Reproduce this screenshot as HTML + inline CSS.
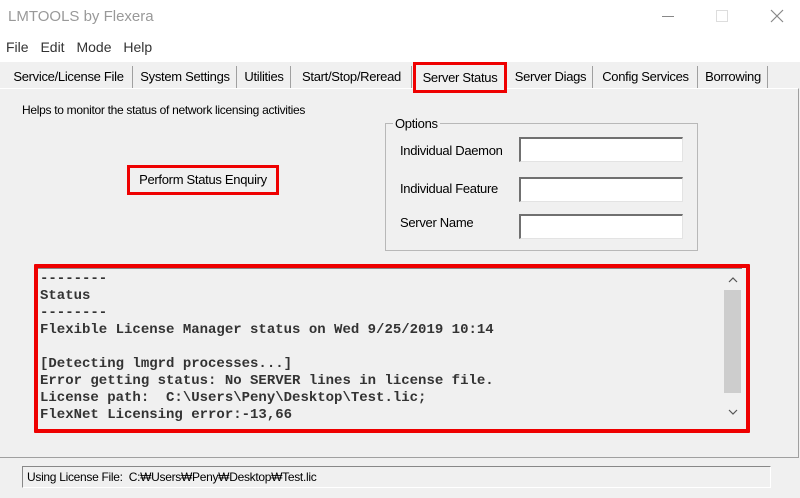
<!DOCTYPE html>
<html><head><meta charset="utf-8"><style>
body{margin:0;width:800px;height:498px;background:#f0f0f0;position:relative;overflow:hidden;font-family:"Liberation Sans","Noto Sans CJK KR",sans-serif;font-size:12px;color:#000}
.a{position:absolute}
.tab{position:absolute;top:66px;height:22px;line-height:22px;font-size:13px;text-align:center;border-right:1px solid #a0a0a0;letter-spacing:-0.3px}
.inp{position:absolute;left:519px;width:164px;height:25px;background:#fff;border-top:2px solid #707070;border-left:2px solid #707070;border-right:1px solid #e3e3e3;border-bottom:1px solid #e3e3e3;box-sizing:border-box}
.lbl{position:absolute;left:400px;font-size:13px;letter-spacing:-0.3px}
.mono{position:absolute;left:40px;font-family:"Liberation Mono",monospace;font-weight:bold;font-size:14px;line-height:17px;white-space:pre;color:#333}
</style></head><body>
<div class="a" style="left:0;top:0;width:800px;height:62px;background:#fff"></div>
<div class="a" style="left:8px;top:8px;font-size:15px;color:#999">LMTOOLS by Flexera</div>
<div class="a" style="left:662px;top:16px;width:12px;height:1px;background:#888"></div>
<div class="a" style="left:716px;top:10px;width:10px;height:10px;border:1px solid #ddd"></div>
<svg class="a" style="left:770px;top:9px" width="14" height="14"><path d="M1 1L13 13M13 1L1 13" stroke="#888" stroke-width="1.2"/></svg>
<div class="a" style="left:6px;top:39px;font-size:14px;color:#333;word-spacing:8px">File Edit Mode Help</div>
<div class="a" style="left:0;top:88px;width:798px;height:368px;border-right:1px solid #a0a0a0;border-bottom:1px solid #a0a0a0;border-top:1px solid #fff"></div>
<div class="tab" style="left:5px;width:127px">Service/License File</div>
<div class="tab" style="left:134px;width:102px">System Settings</div>
<div class="tab" style="left:238px;width:52px">Utilities</div>
<div class="tab" style="left:292px;width:119px">Start/Stop/Reread</div>
<div class="tab" style="left:509px;width:83px">Server Diags</div>
<div class="tab" style="left:594px;width:103px">Config Services</div>
<div class="tab" style="left:699px;width:68px">Borrowing</div>
<div class="a" style="left:413px;top:62px;width:88px;height:25px;border:3px solid #e00;line-height:25px;text-align:center;font-size:13px;background:#f0f0f0;letter-spacing:-0.3px">Server Status</div>
<div class="a" style="left:22px;top:103px;font-size:12px;letter-spacing:-0.3px">Helps to monitor the status of network licensing activities</div>
<div class="a" style="left:127px;top:165px;width:146px;height:24px;border:3px solid #e00;text-align:center;line-height:24px;font-size:13px;letter-spacing:-0.3px">Perform Status Enquiry</div>
<div class="a" style="left:385px;top:123px;width:311px;height:126px;border:1px solid #b8b8b8"></div>
<div class="a" style="left:393px;top:116px;background:#f0f0f0;padding:0 2px;font-size:13px;letter-spacing:-0.3px">Options</div>
<div class="lbl" style="top:143px">Individual Daemon</div>
<div class="lbl" style="top:181px">Individual Feature</div>
<div class="lbl" style="top:215px">Server Name</div>
<div class="inp" style="top:137px"></div>
<div class="inp" style="top:177px"></div>
<div class="inp" style="top:214px"></div>
<div class="a" style="left:34px;top:264px;width:708px;height:161px;border:4px solid #e00;border-radius:1px"></div>
<div class="a" style="left:38px;top:268px;width:704px;height:1px;background:#888"></div>
<div class="a" style="left:724px;top:290px;width:17px;height:103px;background:#cdcdcd"></div>
<svg class="a" style="left:728px;top:276px" width="10" height="8"><path d="M1 6L5 2L9 6" stroke="#555" fill="none" stroke-width="1.2"/></svg>
<svg class="a" style="left:728px;top:408px" width="10" height="8"><path d="M1 2L5 6L9 2" stroke="#555" fill="none" stroke-width="1.2"/></svg>
<div class="mono" style="top:271px">--------
Status
--------
Flexible License Manager status on Wed 9/25/2019 10:14

[Detecting lmgrd processes...]
Error getting status: No SERVER lines in license file.
License path:  C:\Users\Peny\Desktop\Test.lic;
FlexNet Licensing error:-13,66</div>
<div class="a" style="left:22px;top:466px;width:749px;height:22px;border-top:1px solid #888;border-left:1px solid #888;border-right:1px solid #fff;border-bottom:1px solid #fff;box-sizing:border-box;font-size:12px;line-height:21px;padding-left:4px;letter-spacing:-0.3px">Using License File:&nbsp; C:₩Users₩Peny₩Desktop₩Test.lic</div>
</body></html>
